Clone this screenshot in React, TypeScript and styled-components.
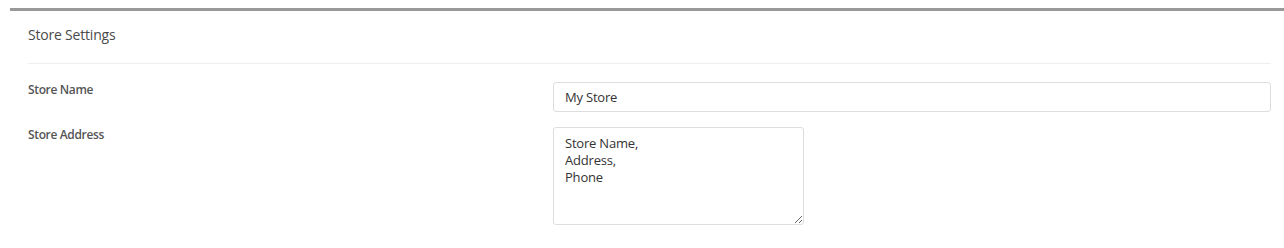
import { FC } from "react";
import styled, { createGlobalStyle } from "styled-components";

const GlobalStyle = createGlobalStyle`
  html, body {
    margin: 0;
    padding: 0;
    background: #ffffff;
    font-family: "Open Sans", "Liberation Sans", sans-serif;
    overflow: hidden;
  }
`;

const App: FC = () => {
  return (
    <>
      <GlobalStyle />
      <Page>
        <Panel>
          <PanelTitle>Store Settings</PanelTitle>
          <Divider />
          <Form>
            <FieldRow>
              <FieldLabel htmlFor="store-name">Store Name</FieldLabel>
              <TextInput id="store-name" defaultValue="My Store" spellCheck={false} />
            </FieldRow>
            <FieldRow>
              <FieldLabel htmlFor="store-address">Store Address</FieldLabel>
              <AddressArea
                id="store-address"
                spellCheck={false}
                defaultValue={"Store Name,\nAddress,\nPhone"}
              />
            </FieldRow>
          </Form>
        </Panel>
      </Page>
    </>
  );
};

export default App;

const Page = styled.div`
  padding: 8px 0 0 10px;
  width: 1284px;
  box-sizing: border-box;
`;

const Panel = styled.section`
  border-top: 3px solid #999999;
  padding: 0 13px 0 18px;
  box-sizing: border-box;
`;

const PanelTitle = styled.h3`
  margin: 0;
  padding: 14px 0 18px;
  font-size: 14px;
  line-height: 20px;
  font-weight: 500;
  letter-spacing: -0.2px;
  color: #4a4a4a;
`;

const Divider = styled.hr`
  margin: 0;
  border: none;
  border-top: 1px solid #eeeeee;
`;

const Form = styled.div`
  display: flex;
  flex-direction: column;
  gap: 15px;
  padding-top: 18px;
`;

const FieldRow = styled.div`
  display: grid;
  grid-template-columns: 525px 1fr;
  align-items: start;
`;

const FieldLabel = styled.label`
  padding-top: 1px;
  font-size: 12px;
  line-height: 14px;
  font-weight: 600;
  letter-spacing: -0.35px;
  color: #555555;
`;

const fieldBase = `
  font-family: "Open Sans", "Liberation Sans", sans-serif;
  font-size: 13px;
  letter-spacing: -0.2px;
  color: #333333;
  border: 1px solid #dddddd;
  border-radius: 3px;
  background: #ffffff;
  box-sizing: border-box;
  outline: none;
`;

const TextInput = styled.input`
  ${fieldBase}
  height: 30px;
  width: 100%;
  padding: 0 11px;
`;

const AddressArea = styled.textarea`
  ${fieldBase}
  width: 251px;
  height: 98px;
  padding: 7px 11px;
  line-height: 17px;
  resize: both;
  display: block;
`;
